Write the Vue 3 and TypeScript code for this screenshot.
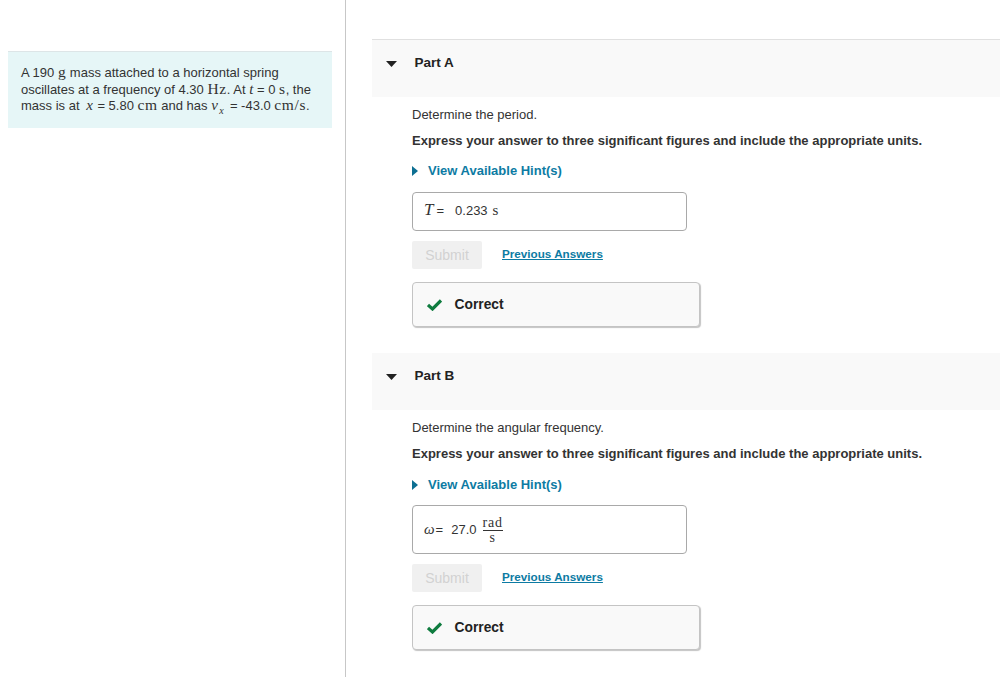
<script setup lang="ts">
interface Part {
  name: string
  prompt: string
  tall: boolean
}
const parts: Part[] = [
  { name: 'Part A', prompt: 'Determine the period.', tall: false },
  { name: 'Part B', prompt: 'Determine the angular frequency.', tall: true }
]
</script>

<template>
  <div class="page">
    <aside class="left">
      <div class="problem">
        A 190 <span class="m">g</span> mass attached to a horizontal spring oscillates at a frequency of 4.30 <span class="m">Hz</span>. At <span class="mi">t</span> = 0 <span class="m">s</span>, the mass is at <span class="mi x">x</span> = 5.80 <span class="m">cm</span> and has <span class="mi v">v<sub>x</sub></span> = -43.0 <span class="m">cm/s</span>.
      </div>
    </aside>
    <main class="right">
      <section v-for="p in parts" :key="p.name" class="part" :class="{ first: !p.tall, second: p.tall }">
        <header class="head">
          <svg class="caret" width="11" height="6" viewBox="0 0 11 6"><path d="M0 0H11L5.5 6Z" fill="#222" /></svg>
          <span class="title">{{ p.name }}</span>
        </header>
        <div class="body">
          <p class="prompt">{{ p.prompt }}</p>
          <p class="express">Express your answer to three significant figures and include the appropriate units.</p>
          <div class="hint">
            <svg width="6" height="10" viewBox="0 0 6 10"><path d="M0 0L6 5L0 10Z" fill="#0d6f92" /></svg>
            <span>View Available Hint(s)</span>
          </div>
          <div class="answer">
            <template v-if="!p.tall">
              <span class="var">T</span><span class="eq">=</span><span class="val">0.233</span><span class="unit">s</span>
            </template>
            <template v-else>
              <span class="var omega">ω</span><span class="eq">=</span><span class="val">27.0</span>
              <span class="frac"><span class="num">rad</span><span class="den">s</span></span>
            </template>
          </div>
          <div class="actions">
            <button class="submit" disabled>Submit</button>
            <a class="prev">Previous Answers</a>
          </div>
          <div class="result">
            <svg width="15" height="12" viewBox="0 0 15 12"><path d="M1 6L5.5 10L14 1.5" fill="none" stroke="#0f7c3f" stroke-width="3.2" /></svg>
            <span>Correct</span>
          </div>
        </div>
      </section>
    </main>
  </div>
</template>

<style>
html, body { margin: 0; background: #fff; }
</style>

<style scoped>
.page {
  display: flex;
  width: 1000px;
  height: 677px;
  overflow: hidden;
  font-family: "Liberation Sans", Arial, sans-serif;
  font-size: 13px;
  color: #333;
}
.left {
  flex: none;
  width: 346px;
  height: 677px;
  box-sizing: border-box;
  border-right: 1px solid #c7c7c7;
  padding: 51px 0 0 8px;
}
.problem {
  width: 324px;
  height: 77px;
  box-sizing: border-box;
  background: #e6f6f7;
  border-top: 1px solid #dde5e7;
  padding: 13px 13px 0;
  line-height: 16.5px;
}
.m {
  font-family: "Liberation Serif", serif;
  font-size: 15.5px;
  line-height: 0;
  letter-spacing: 0.6px;
}
.mi {
  font-family: "Liberation Serif", serif;
  font-style: italic;
  font-size: 15px;
  line-height: 0;
}
.mi.x { margin: 0 1px 0 3px; }
.mi.v { letter-spacing: 1.5px; margin-right: 1px; }
.mi sub { font-size: 10px; line-height: 0; }
.right {
  flex: 1;
  padding: 39px 0 0 26px;
  min-width: 0;
}
.part { margin-bottom: 26px; }
.head {
  height: 57px;
  background: #f9f9f9;
  display: flex;
  align-items: flex-start;
  padding: 15px 0 0 14px;
  box-sizing: border-box;
}
.part.first .head { height: 58px; border-top: 1px solid #e0e0e0; }
.caret { margin-top: 6px; flex: none; }
.title {
  margin-left: 17.5px;
  font-weight: 700;
  font-size: 13.5px;
  line-height: 15px;
  color: #222;
}
.body { padding-left: 40px; }
.prompt {
  margin: 0;
  padding-top: 10px;
  line-height: 15px;
}
.express {
  margin: 11px 0 0;
  font-weight: 700;
  line-height: 15px;
  white-space: nowrap;
}
.hint {
  margin-top: 15px;
  display: flex;
  align-items: center;
  gap: 10px;
  color: #0d7ba3;
  font-weight: 700;
  line-height: 15px;
}
.second .hint { margin-top: 16px; }
.answer {
  margin-top: 14px;
  width: 275px;
  height: 39px;
  box-sizing: border-box;
  border: 1px solid #a9a9a9;
  border-radius: 4px;
  padding: 0 0 3px 11px;
  display: flex;
  align-items: center;
}
.second .answer { height: 49px; margin-top: 13px; padding-bottom: 0; }
.var { font-family: "Liberation Serif", serif; font-style: italic; font-size: 17px; }
.omega { font-size: 15px; }
.eq { margin-left: 3px; margin-right: 11px; }
.second .eq { margin-left: 1px; margin-right: 8px; }
.unit { font-family: "Liberation Serif", serif; font-size: 15px; margin-left: 5px; }
.frac {
  display: inline-flex;
  flex-direction: column;
  align-items: center;
  margin-left: 6px;
  font-family: "Liberation Serif", serif;
  font-size: 14px;
  line-height: 13px;
  letter-spacing: 0.8px;
}
.num { border-bottom: 1px solid #333; padding-bottom: 1px; }
.actions {
  margin-top: 10px;
  display: flex;
  align-items: flex-start;
  gap: 20px;
}
.submit {
  width: 70px;
  height: 28px;
  border: 0;
  border-radius: 2px;
  background: #f0f0f0;
  color: #d2d2d2;
  font: 14px/28px "Liberation Sans", Arial, sans-serif;
  padding: 0;
}
.prev {
  margin-top: 5px;
  color: #0d7ba3;
  font-weight: 700;
  font-size: 11.7px;
  line-height: 15px;
  text-decoration: underline;
}
.result {
  margin-top: 13px;
  width: 288px;
  height: 45px;
  box-sizing: border-box;
  border: 1px solid #c4c4c4;
  border-radius: 4px;
  background: #f9f9f9;
  box-shadow: 1px 1px 1px #c4c4c4;
  display: flex;
  align-items: center;
  padding-left: 14px;
  gap: 12.5px;
  font-weight: 700;
  font-size: 13.8px;
  color: #222;
}
</style>
